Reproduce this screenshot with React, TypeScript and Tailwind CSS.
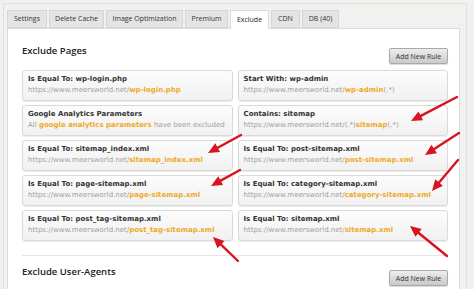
import React from "react";

type Rule = {
  title: string;
  parts: { text: string; hl?: boolean }[];
};

const base = "https://www.meersworld.net/";

const rules: Rule[] = [
  { title: "Is Equal To: wp-login.php", parts: [{ text: base }, { text: "wp-login.php", hl: true }] },
  { title: "Start With: wp-admin", parts: [{ text: base }, { text: "wp-admin", hl: true }, { text: "(.*)" }] },
  {
    title: "Google Analytics Parameters",
    parts: [{ text: "All " }, { text: "google analytics parameters", hl: true }, { text: " have been excluded" }],
  },
  { title: "Contains: sitemap", parts: [{ text: base + "(.*)" }, { text: "sitemap", hl: true }, { text: "(.*)" }] },
  { title: "Is Equal To: sitemap_index.xml", parts: [{ text: base }, { text: "sitemap_index.xml", hl: true }] },
  { title: "Is Equal To: post-sitemap.xml", parts: [{ text: base }, { text: "post-sitemap.xml", hl: true }] },
  { title: "Is Equal To: page-sitemap.xml", parts: [{ text: base }, { text: "page-sitemap.xml", hl: true }] },
  { title: "Is Equal To: category-sitemap.xml", parts: [{ text: base }, { text: "category-sitemap.xml", hl: true }] },
  { title: "Is Equal To: post_tag-sitemap.xml", parts: [{ text: base }, { text: "post_tag-sitemap.xml", hl: true }] },
  { title: "Is Equal To: sitemap.xml", parts: [{ text: base }, { text: "sitemap.xml", hl: true }] },
];

const tabs = [
  { label: "Settings", w: "w-[40px]" },
  { label: "Delete Cache", w: "w-[55px]" },
  { label: "Image Optimization", w: "w-[77px]" },
  { label: "Premium", w: "w-[43px]" },
  { label: "Exclude", w: "w-[39px]", active: true },
  { label: "CDN", w: "w-[29px]" },
  { label: "DB (40)", w: "w-[37px]" },
];

// tail -> tip
const arrows: [number, number, number, number][] = [
  [457, 97, 411, 121],
  [241, 135, 208, 153],
  [459, 133, 425, 155],
  [240, 170, 211, 186],
  [458, 160, 432, 191],
  [238, 261, 213, 237],
  [447, 256, 410, 226],
];

function Arrow({ a }: { a: [number, number, number, number] }) {
  const [x1, y1, x2, y2] = a;
  const dx = x2 - x1;
  const dy = y2 - y1;
  const len = Math.hypot(dx, dy);
  const ux = dx / len;
  const uy = dy / len;
  const hl = 11;
  const hw = 5;
  const bx = x2 - ux * hl;
  const by = y2 - uy * hl;
  const pts = `${x2},${y2} ${bx - uy * hw},${by + ux * hw} ${bx + uy * hw},${by - ux * hw}`;
  return (
    <g>
      <line x1={x1} y1={y1} x2={bx + ux} y2={by + uy} stroke="#d7141f" strokeWidth={2.4} strokeLinecap="round" />
      <polygon points={pts} fill="#d7141f" />
    </g>
  );
}

function AddButton({ className }: { className: string }) {
  return (
    <button
      className={`${className} block h-[16px] w-[59px] rounded-[2px] border border-[#a9a9a9] bg-gradient-to-b from-[#eeeeee] to-[#c9c9c9] text-[7px] leading-none text-[#333] shadow-[0_1px_1px_rgba(0,0,0,0.15)]`}
    >
      Add New Rule
    </button>
  );
}

function RuleCard({ rule }: { rule: Rule }) {
  return (
    <div className="h-[31px] rounded-[3px] border border-[#d9d9d9] bg-gradient-to-b from-[#fcfcfc] to-[#f1f1f1] px-[5px] pt-[3px] shadow-[0_1px_1px_rgba(0,0,0,0.08)] font-['DejaVu_Sans',Verdana,sans-serif]">
      <div className="text-[7px] font-bold leading-[11px] text-[#333] whitespace-nowrap">{rule.title}</div>
      <div className="text-[7px] leading-[11px] text-[#a0a0a0] whitespace-nowrap">
        {rule.parts.map((p, i) =>
          p.hl ? (
            <span key={i} className="font-bold text-[#efa91f]">
              {p.text}
            </span>
          ) : (
            <span key={i}>{p.text}</span>
          ),
        )}
      </div>
    </div>
  );
}

export default function App() {
  return (
    <div className="relative h-[289px] w-[474px] overflow-hidden bg-[#f1f1f0] pl-[3px] pt-[3px] font-['Open_Sans',sans-serif]">
      <div className="h-[300px] w-[464px] border-l border-r border-t border-[#e0e0de] pl-[3px] pt-[6px]">
        <div className="flex items-end gap-[2px]">
          {tabs.map((t) => (
            <div
              key={t.label}
              className={
                t.active
                  ? `${t.w} relative z-10 -mb-px flex h-[19px] items-center justify-center border border-b-0 border-[#dcdcdc] bg-white text-[7px] text-[#222]`
                  : `${t.w} flex h-[18px] items-center justify-center border border-[#d6d6d6] bg-[#e4e4e4] text-[7px] text-[#333]`
              }
            >
              {t.label}
            </div>
          ))}
        </div>
        <div className="h-[270px] w-[453px] border border-[#dcdcdc] bg-white pl-[14px] pr-[11px] pt-[15px]">
          <div className="flex items-start justify-between">
            <h2 className="text-[9.5px] font-semibold leading-[13px] text-[#222]">Exclude Pages</h2>
            <AddButton className="mt-[4px]" />
          </div>
          <div className="mt-[6px] grid grid-cols-2 gap-x-[5px] gap-y-[4px]">
            {rules.map((r) => (
              <RuleCard key={r.title} rule={r} />
            ))}
          </div>
          <div className="mt-[14px] border-t border-[#e6e6e6]" />
          <div className="mt-[9px] flex items-start justify-between">
            <h2 className="text-[9.5px] font-semibold leading-[13px] text-[#222]">Exclude User-Agents</h2>
            <AddButton className="mt-[5px]" />
          </div>
        </div>
      </div>
      <svg className="pointer-events-none absolute left-0 top-0" width={474} height={289}>
        {arrows.map((a, i) => (
          <Arrow key={i} a={a} />
        ))}
      </svg>
    </div>
  );
}
